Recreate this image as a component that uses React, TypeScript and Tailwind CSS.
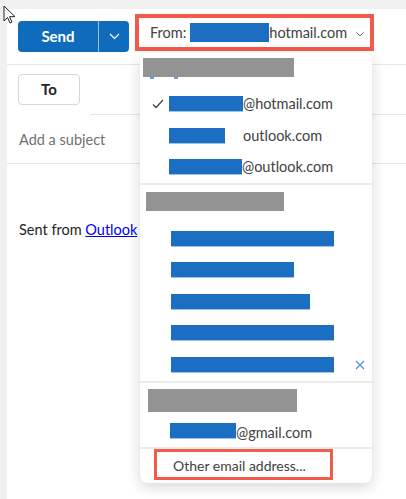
import React from 'react';

const font = { fontFamily: 'Lato, "Open Sans", sans-serif' };

function Bar({ w }: { w: string }) {
  return <div className={`h-[16px] bg-[#1b6ec2] border-b border-[#9fc3e8] ${w}`} />;
}

export default function App() {
  return (
    <div className="relative w-[406px] h-[499px] overflow-hidden bg-[#f0f0f0] pt-[9px] pl-[7px]" style={font}>
      {/* Compose panel */}
      <div className="h-full bg-white text-[#242424]">
        {/* Toolbar */}
        <div className="h-[56px] flex items-start pt-[12px] pl-[11px] border-b border-[#e6e6e6]">
          <div className="flex h-[31px] rounded-[4px] overflow-hidden">
            <button className="w-[80px] bg-[#0f6cbd] text-white text-[15px] font-bold">Send</button>
            <div className="w-px bg-[#9cc0e4]" />
            <button className="w-[30px] bg-[#0f6cbd] flex items-center justify-center">
              <svg width="11" height="7" viewBox="0 0 11 7" fill="none" stroke="white" strokeWidth="1.2">
                <path d="M1 1l4.5 4.5L10 1" />
              </svg>
            </button>
          </div>
          <div className="ml-[6px] -mt-[7px] w-[239px] h-[37px] border-[4px] border-[#f25a4b] flex items-center pl-[11px] text-[14.5px] text-[#424242]">
            <span>From:</span>
            <span className="ml-[4px] w-[79px] h-[19px] bg-[#1b6ec2]" />
            <span>hotmail.com</span>
            <svg className="ml-[9px] mt-[3px]" width="8" height="5" viewBox="0 0 8 5" fill="none" stroke="#707070" strokeWidth="1">
              <path d="M0.5 0.5L4 4l3.5-3.5" />
            </svg>
          </div>
        </div>

        {/* To row */}
        <div className="h-[49px] flex items-center pl-[11px]">
          <div className="w-[62px] h-[31px] border border-[#d6d6d6] rounded-[4px] flex items-center justify-center text-[15px] font-bold">To</div>
        </div>
        <div className="ml-[83px] h-px bg-[#e6e6e6]" />

        {/* Subject */}
        <div className="h-[49px] flex items-center pl-[12px] pt-[2px] text-[14.5px] text-[#707070] border-b border-[#e6e6e6]">Add a subject</div>

        {/* Body */}
        <div className="pt-[55px] pl-[12px] text-[14.5px] text-[#242424]">
          Sent from <span className="text-[#0000ee] underline">Outlook</span>
        </div>
      </div>

      {/* Mouse cursor */}
      <svg className="absolute left-[3px] top-[5px]" width="14" height="20" viewBox="0 0 14 20">
        <path d="M1 1v15l3.5-3.5 2.5 5.5 2-1-2.5-5.3H12z" fill="white" stroke="#222" strokeWidth="1" strokeLinejoin="round" />
      </svg>

      {/* From dropdown */}
      <div className="absolute left-[140px] top-[53px] w-[232px] h-[430px] bg-white rounded-[8px] shadow-[0_4px_14px_rgba(0,0,0,0.16)] text-[14px] text-[#424242] overflow-hidden">
        {/* Section 1 */}
        <div className="pt-[5px] pl-[3px]">
          <div className="w-[151px] h-[19px] bg-[#939393]" />
          <div className="flex gap-[20px] pl-[7px]">
            <div className="w-[4px] h-[2px] bg-[#6aa0d8]" />
            <div className="w-[4px] h-[2px] bg-[#6aa0d8]" />
          </div>
        </div>
        <div className="pt-[9px]">
          <div className="h-[32px] flex items-center">
            <svg className="ml-[12px] mr-[5px]" width="12" height="10" viewBox="0 0 12 10" fill="none" stroke="#424242" strokeWidth="1.3">
              <path d="M1 5.5L4 8.5 11 1" />
            </svg>
            <Bar w="w-[74px]" />
            <span className="text-[14.5px]">@hotmail.com</span>
          </div>
          <div className="h-[31px] flex items-center pl-[29px]">
            <Bar w="w-[56px]" />
            <span className="ml-[18px] text-[14.5px]">outlook.com</span>
          </div>
          <div className="h-[32px] flex items-center pl-[29px]">
            <Bar w="w-[73px]" />
            <span className="text-[14.5px]">@outlook.com</span>
          </div>
        </div>
        <div className="h-[2px] bg-[#ebebeb]" />

        {/* Section 2 */}
        <div className="pt-[7px] pl-[6px]">
          <div className="w-[138px] h-[19px] bg-[#939393]" />
        </div>
        <div className="pt-[12px]">
          {['w-[163px]', 'w-[123px]', 'w-[139px]', 'w-[163px]', 'w-[163px]'].map((w, i) => (
            <div key={i} className="h-[31.5px] flex items-center pl-[31px]">
              <Bar w={w} />
              {i === 4 && (
                <svg className="ml-[21px]" width="10" height="10" viewBox="0 0 10 10" fill="none" stroke="#4a8fd6" strokeWidth="1.1">
                  <path d="M1 1l8 8M9 1L1 9" />
                </svg>
              )}
            </div>
          ))}
        </div>
        <div className="h-[2px] bg-[#ebebeb]" />

        {/* Section 3 */}
        <div className="pt-[6px] pl-[8px]">
          <div className="w-[149px] h-[23px] bg-[#939393]" />
        </div>
        <div className="h-[35px] flex items-center pl-[30px] pt-[3px]">
          <Bar w="w-[66px]" />
          <span className="mt-[5px] text-[14.5px]">@gmail.com</span>
        </div>
        <div className="h-[2px] bg-[#ebebeb]" />

        {/* Other email address */}
        <div className="ml-[14px] w-[179px] h-[31px] border-[3px] border-[#f25a4b] flex items-center pl-[16px] pt-[3px] text-[14px] text-[#424242]">
          Other email address...
        </div>
      </div>
    </div>
  );
}
